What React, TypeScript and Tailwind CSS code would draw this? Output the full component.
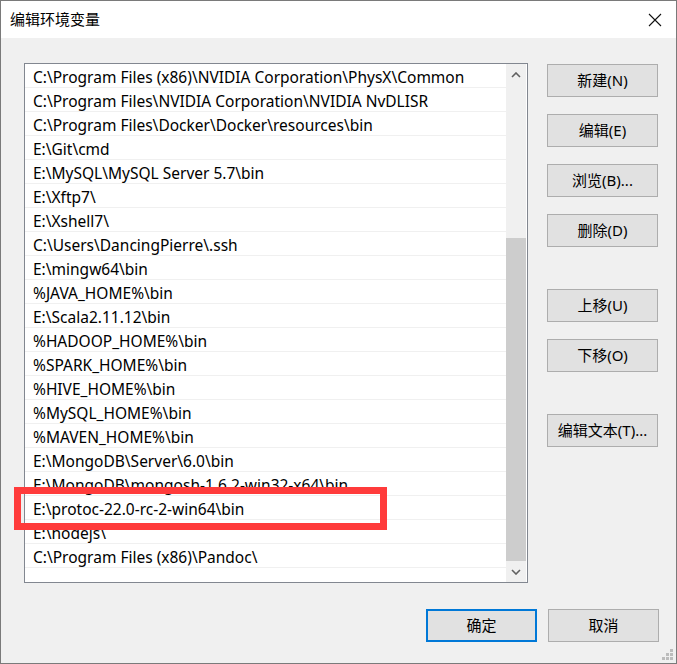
import React from "react";

const paths = [
  "C:\\Program Files (x86)\\NVIDIA Corporation\\PhysX\\Common",
  "C:\\Program Files\\NVIDIA Corporation\\NVIDIA NvDLISR",
  "C:\\Program Files\\Docker\\Docker\\resources\\bin",
  "E:\\Git\\cmd",
  "E:\\MySQL\\MySQL Server 5.7\\bin",
  "E:\\Xftp7\\",
  "E:\\Xshell7\\",
  "C:\\Users\\DancingPierre\\.ssh",
  "E:\\mingw64\\bin",
  "%JAVA_HOME%\\bin",
  "E:\\Scala2.11.12\\bin",
  "%HADOOP_HOME%\\bin",
  "%SPARK_HOME%\\bin",
  "%HIVE_HOME%\\bin",
  "%MySQL_HOME%\\bin",
  "%MAVEN_HOME%\\bin",
  "E:\\MongoDB\\Server\\6.0\\bin",
  "E:\\MongoDB\\mongosh-1.6.2-win32-x64\\bin",
  "E:\\protoc-22.0-rc-2-win64\\bin",
  "E:\\nodejs\\",
  "C:\\Program Files (x86)\\Pandoc\\",
];

const font = {
  fontFamily: '"Noto Sans", "Noto Sans CJK SC", sans-serif',
};

function WinButton({
  label,
  primary,
  className = "",
}: {
  label: string;
  primary?: boolean;
  className?: string;
}) {
  return (
    <button
      className={`w-[111px] h-[33px] bg-[#e1e1e1] text-[15px] text-black flex items-center justify-center ${
        primary ? "border-2 border-[#0078d7]" : "border border-[#adadad]"
      } ${className}`}
    >
      {label}
    </button>
  );
}

export default function App() {
  return (
    <div
      className="w-[677px] h-[664px] border border-[#7a7a7a] bg-[#f0f0f0] flex flex-col relative"
      style={font}
    >
      {/* title bar */}
      <div className="h-[37px] bg-white flex items-center justify-between pl-[9px] pr-[14px]">
        <span className="text-[15px] text-black">编辑环境变量</span>
        <svg width="14" height="14" viewBox="0 0 14 14">
          <path d="M1 1L13 13M13 1L1 13" stroke="#111" strokeWidth="1.1" />
        </svg>
      </div>

      {/* body */}
      <div className="flex-1 flex flex-col pl-[23px] pt-[25px]">
        <div className="flex">
          <div className="relative w-[504px] h-[520px] border border-[#828790] bg-white flex">
            <ul className="flex-1 flex flex-col">
              {paths.map((p) => (
                <li
                  key={p}
                  className="h-[24px] border-b border-[#f0f0f0] pl-[8px] pt-[3px] text-[15.5px] leading-[20px] text-black whitespace-nowrap overflow-hidden"
                >
                  {p}
                </li>
              ))}
            </ul>
            {/* scrollbar */}
            <div className="w-[20px] mr-[1px] bg-[#f0f0f0] flex flex-col">
              <div className="h-[22px] flex items-center justify-center">
                <svg width="10" height="6" viewBox="0 0 10 6">
                  <path d="M1 5L5 1L9 5" fill="none" stroke="#606060" strokeWidth="1.6" />
                </svg>
              </div>
              <div className="h-[152px]" />
              <div className="flex-1 bg-[#cdcdcd]" />
              <div className="h-[21px] flex items-center justify-center">
                <svg width="10" height="6" viewBox="0 0 10 6">
                  <path d="M1 1L5 5L9 1" fill="none" stroke="#606060" strokeWidth="1.6" />
                </svg>
              </div>
            </div>
            {/* highlight */}
            <div className="absolute left-[-11px] top-[423px] w-[373px] h-[43px] border-[7px] border-[#ff3b3b] pointer-events-none" />
          </div>

          <div className="ml-[19px] mt-[1px] flex flex-col">
            <WinButton label="新建(N)" />
            <WinButton label="编辑(E)" className="mt-[17px]" />
            <WinButton label="浏览(B)..." className="mt-[17px]" />
            <WinButton label="删除(D)" className="mt-[17px]" />
            <WinButton label="上移(U)" className="mt-[42px]" />
            <WinButton label="下移(O)" className="mt-[17px]" />
            <WinButton label="编辑文本(T)..." className="mt-[42px]" />
          </div>
        </div>

        <div className="flex justify-end gap-[11px] mt-[26px] pr-[17px]">
          <WinButton label="确定" primary />
          <WinButton label="取消" />
        </div>
      </div>

      {/* resize grip */}
      <svg
        className="absolute right-[2px] bottom-[2px]"
        width="12"
        height="12"
        viewBox="0 0 12 12"
      >
        <rect x="8" y="0" width="3" height="3" fill="#bcbcbc" />
        <rect x="4" y="4" width="3" height="3" fill="#bcbcbc" />
        <rect x="8" y="4" width="3" height="3" fill="#bcbcbc" />
        <rect x="0" y="8" width="3" height="3" fill="#bcbcbc" />
        <rect x="4" y="8" width="3" height="3" fill="#bcbcbc" />
        <rect x="8" y="8" width="3" height="3" fill="#bcbcbc" />
      </svg>
    </div>
  );
}
